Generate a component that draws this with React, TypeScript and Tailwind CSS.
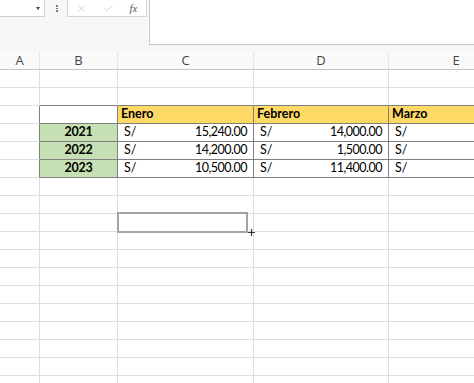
import { X, Check } from "lucide-react"

const colWidths = ["w-[40px]", "w-[78px]", "w-[136px]", "w-[135px]", "w-[135px]"]
const letters = ["A", "B", "C", "D", "E"]

type Cell = { text?: string; kind?: "head" | "year" | "money" }

const table: Record<number, Cell[]> = {
  2: [{}, {}, { text: "Enero", kind: "head" }, { text: "Febrero", kind: "head" }, { text: "Marzo", kind: "head" }],
  3: [{}, { text: "2021", kind: "year" }, { text: "15,240.00", kind: "money" }, { text: "14,000.00", kind: "money" }, { text: "", kind: "money" }],
  4: [{}, { text: "2022", kind: "year" }, { text: "14,200.00", kind: "money" }, { text: "1,500.00", kind: "money" }, { text: "", kind: "money" }],
  5: [{}, { text: "2023", kind: "year" }, { text: "10,500.00", kind: "money" }, { text: "11,400.00", kind: "money" }, { text: "", kind: "money" }],
}

function GridCell({ row, col }: { row: number; col: number }) {
  const inTable = row >= 2 && row <= 5 && col >= 1
  const darkRight = inTable || (col === 0 && row >= 2 && row <= 5)
  const darkBottom = inTable || (row === 1 && col >= 1)
  const cell = table[row]?.[col] ?? {}

  let bg = "bg-white"
  if (row === 2 && col >= 2) bg = "bg-[#ffd966]"
  if (row >= 3 && row <= 5 && col === 1) bg = "bg-[#c6e0b4]"

  return (
    <div
      className={`relative shrink-0 h-[18px] border-r border-b ${colWidths[col]} ${bg} ${
        darkRight ? "border-r-[#7f7f7f]" : "border-r-[#dedede]"
      } ${darkBottom ? "border-b-[#7f7f7f]" : "border-b-[#dedede]"} flex items-center text-[12.5px] leading-none text-black`}
    >
      {cell.kind === "head" && <span className="pl-[3px] font-bold">{cell.text}</span>}
      {cell.kind === "year" && <span className="w-full text-center font-bold tracking-[-0.3px]">{cell.text}</span>}
      {cell.kind === "money" && (
        <div className="w-full flex justify-between pl-[6px] pr-[6px]">
          <span>S/</span>
          <span className="tracking-[-0.5px]">{cell.text}</span>
        </div>
      )}
      {row === 8 && col === 2 && (
        <div className="absolute z-10 left-[-1px] top-[-2px] w-[131px] h-[21px] border-2 border-[#a3a3a3]">
          <svg className="absolute right-[-10px] bottom-[-6px]" width="9" height="9" viewBox="0 0 9 9">
            <path d="M4.5 1v7M1 4.5h7" stroke="#333" strokeWidth="1.2" />
          </svg>
        </div>
      )}
    </div>
  )
}

export default function App() {
  const rows = Array.from({ length: 18 }, (_, i) => i)
  return (
    <div className="w-[474px] h-[383px] overflow-hidden bg-white font-['Lato',sans-serif]">
      {/* formula bar area */}
      <div className="h-[52px] flex bg-[#f7f7f7]">
        <div className="w-[149px] shrink-0">
          <div className="h-[17px] flex items-center">
            <div className="w-[45px] h-[17px] bg-white border-r border-b border-[#cfcfcf] flex items-center justify-end pr-[4px]">
              <div className="w-0 h-0 border-l-[2px] border-r-[2px] border-t-[3px] border-l-transparent border-r-transparent border-t-[#444]" />
            </div>
            <div className="ml-[11px] flex flex-col gap-[1px]">
              <div className="w-[1.5px] h-[1.5px] bg-[#777]" />
              <div className="w-[1.5px] h-[1.5px] bg-[#777]" />
              <div className="w-[1.5px] h-[1.5px] bg-[#777]" />
            </div>
            <div className="ml-[9px] w-[80px] h-[17px] bg-white border-l border-r border-b border-[#d4d4d4] flex items-center justify-between pl-[8px] pr-[8px]">
              <X size={11} strokeWidth={1.3} color="#b5b5b5" />
              <Check size={11} strokeWidth={1.3} color="#b5b5b5" />
              <span className="font-['Liberation_Serif',serif] italic text-[11px] text-[#555]">fx</span>
            </div>
          </div>
        </div>
        <div className="flex-1 h-[45px] bg-white border-l border-b border-[#c8c8c8]" />
      </div>

      {/* column headers */}
      <div className="flex h-[18px] bg-[#fafafa] border-b border-[#c4c4c4] font-['Open_Sans',sans-serif] text-[13px] text-[#444]">
        {letters.map((l, i) => (
          <div key={l} className={`shrink-0 ${colWidths[i]} flex items-center justify-center border-r border-[#e6e6e6]`}>
            {l}
          </div>
        ))}
      </div>

      {/* grid */}
      {rows.map((r) => (
        <div key={r} className="flex">
          {colWidths.map((_, c) => (
            <GridCell key={c} row={r} col={c} />
          ))}
        </div>
      ))}
    </div>
  )
}
